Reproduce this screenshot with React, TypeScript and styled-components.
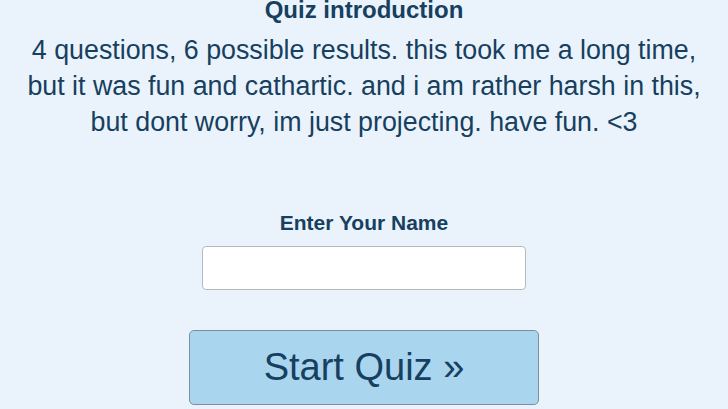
import styled, { createGlobalStyle } from "styled-components";

const GlobalStyle = createGlobalStyle`
  html, body {
    margin: 0;
    padding: 0;
    background: #eaf3fb;
  }
  body {
    font-family: "Liberation Sans", Arial, sans-serif;
    color: #173f5f;
  }
`;

const Page = styled.div`
  display: flex;
  flex-direction: column;
  align-items: center;
  width: 728px;
  height: 409px;
  overflow: hidden;
`;

const Title = styled.h2`
  margin: 0;
  font-size: 24px;
  font-weight: bold;
  line-height: 20px;
`;

const Intro = styled.p`
  margin: 12px 0 0;
  font-size: 26.8px;
  line-height: 36px;
  text-align: center;
`;

const NameLabel = styled.label`
  margin-top: 71px;
  font-size: 21px;
  font-weight: bold;
  line-height: 24px;
`;

const NameInput = styled.input`
  box-sizing: border-box;
  margin-top: 11px;
  width: 324px;
  height: 44px;
  background: #ffffff;
  border: 1px solid #b4b9be;
  border-radius: 4px;
  font-size: 18px;
  padding: 0 10px;
  outline: none;
`;

const StartButton = styled.button`
  box-sizing: border-box;
  margin-top: 40px;
  width: 350px;
  height: 75px;
  background: #a9d5ef;
  border: 1px solid #7e8e9c;
  border-radius: 5px;
  color: #173f5f;
  font-family: "Liberation Sans", Arial, sans-serif;
  font-size: 38px;
  cursor: pointer;
`;

export default function App() {
  return (
    <>
      <GlobalStyle />
      <Page>
        <Title>Quiz introduction</Title>
        <Intro>
          4 questions, 6 possible results. this took me a long time,
          <br />
          but it was fun and cathartic. and i am rather harsh in this,
          <br />
          but dont worry, im just projecting. have fun. &lt;3
        </Intro>
        <NameLabel htmlFor="name">Enter Your Name</NameLabel>
        <NameInput id="name" type="text" />
        <StartButton>Start Quiz »</StartButton>
      </Page>
    </>
  );
}
